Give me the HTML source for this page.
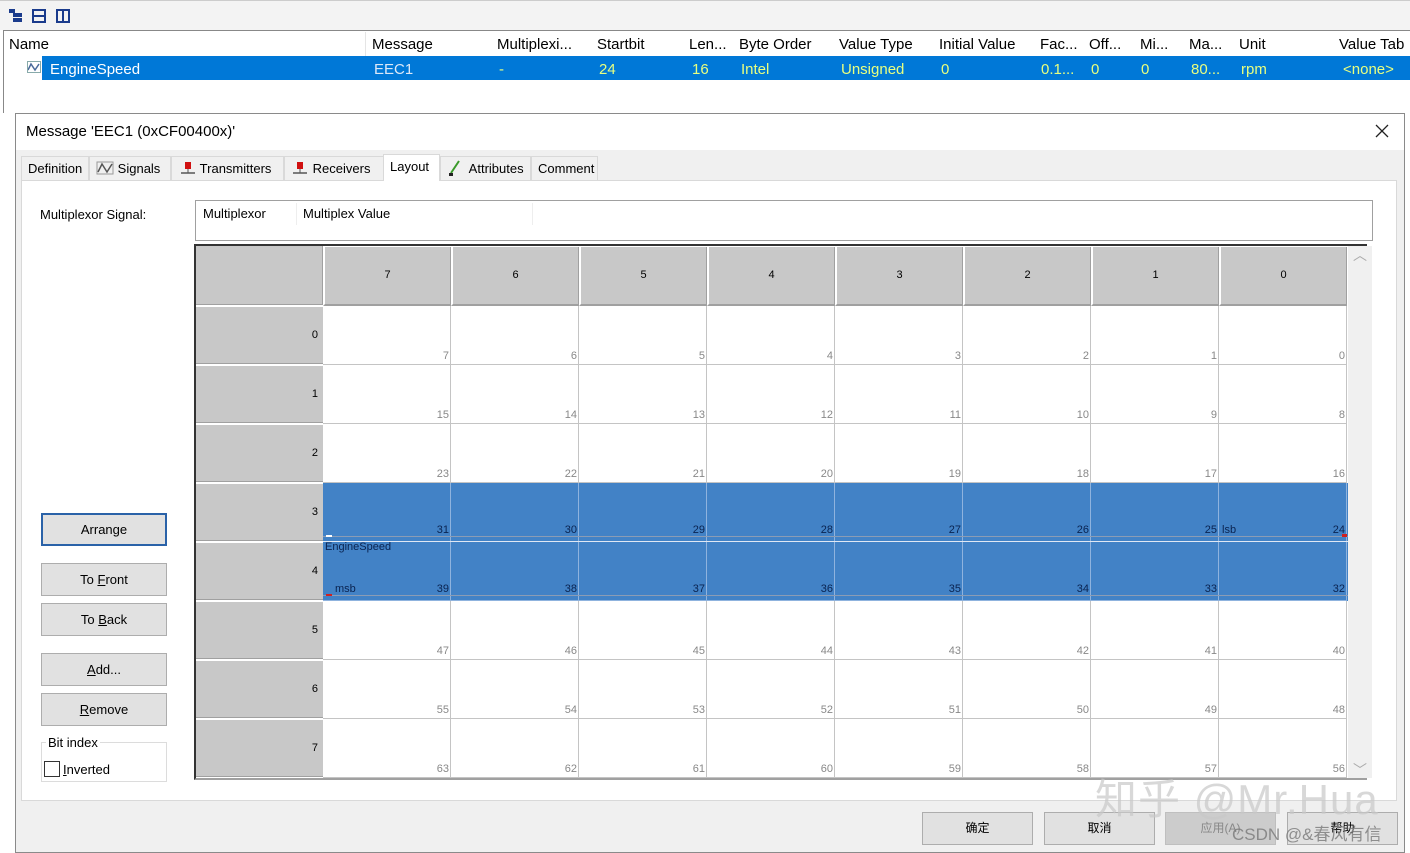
<!DOCTYPE html>
<html><head><meta charset="utf-8"><style>
*{margin:0;padding:0;box-sizing:border-box}
body{width:1410px;height:851px;overflow:hidden;background:#fff;font-family:"Liberation Sans","Noto Sans CJK SC",sans-serif;position:relative}
.a{position:absolute}
.hd{font-size:15px;color:#000;top:36px}
.sl{font-size:15px;color:#e8ff80;top:61px}
.tab{position:absolute;top:156px;height:24px;font-size:13px;border:1px solid #d9d9d9;border-bottom:none;background:#f0f0f0;padding:4px 6px 0 6px;white-space:nowrap}
.btn{position:absolute;left:41px;width:126px;height:33px;background:#e1e1e1;border:1px solid #adadad;font-size:13px;text-align:center;line-height:31px}
.bb{position:absolute;top:812px;width:111px;height:33px;background:#e1e1e1;border:1px solid #adadad;font-size:12px;text-align:center;line-height:31px}
.row{position:absolute;left:323px;width:1025px;height:59px;display:flex}
.row div{width:128px;height:59px;border-right:1px solid #c4c4c4;border-bottom:1px solid #c4c4c4;font-size:11px;color:#888;text-align:right;padding-right:1px;padding-top:44px}
.row.b div{color:#0a2350;border-right:1px solid #8fb3de;border-bottom:1px solid #8fb3de}
.rh{position:absolute;left:196px;width:127px;height:59px;background:#c8c8c8;border-top:2px solid #fff;border-bottom:1px solid #a0a0a0;font-size:11px;text-align:right;padding-right:5px;padding-top:22px}
.ch{position:absolute;top:247px;width:128px;height:59px;background:#c8c8c8;border-left:2px solid #fff;border-right:1px solid #a0a0a0;border-bottom:2px solid #a0a0a0;font-size:11px;text-align:center;padding-top:22px}
</style></head><body>
<div class="a" style="left:0;top:0;width:1410px;height:30px;background:#f3f3f3;border-top:1px solid #ccc"></div>
<svg class="a" style="left:8px;top:8px" width="66" height="16">
<rect x="1" y="1" width="6" height="4" fill="#1a3b8c"/><rect x="5" y="5" width="9" height="4" fill="#1a3b8c"/><rect x="5" y="10" width="9" height="4" fill="#1a3b8c"/>
<rect x="25" y="2" width="12" height="12" fill="none" stroke="#1a3b8c" stroke-width="2"/><line x1="25" y1="8" x2="37" y2="8" stroke="#1a3b8c" stroke-width="2"/>
<rect x="49" y="2" width="12" height="12" fill="none" stroke="#1a3b8c" stroke-width="2"/><line x1="55" y1="2" x2="55" y2="14" stroke="#1a3b8c" stroke-width="2"/>
</svg>
<div class="a" style="left:3px;top:30px;width:1407px;height:83px;border-left:1px solid #888;border-top:1px solid #888;background:#fff"></div>
<div class="a hd" style="left:9px">Name</div>
<div class="a hd" style="left:372px">Message</div>
<div class="a hd" style="left:497px">Multiplexi...</div>
<div class="a hd" style="left:597px">Startbit</div>
<div class="a hd" style="left:689px">Len...</div>
<div class="a hd" style="left:739px">Byte Order</div>
<div class="a hd" style="left:839px">Value Type</div>
<div class="a hd" style="left:939px">Initial Value</div>
<div class="a hd" style="left:1040px">Fac...</div>
<div class="a hd" style="left:1089px">Off...</div>
<div class="a hd" style="left:1140px">Mi...</div>
<div class="a hd" style="left:1189px">Ma...</div>
<div class="a hd" style="left:1239px">Unit</div>
<div class="a hd" style="left:1339px">Value Tab</div>
<div class="a" style="left:365px;top:32px;width:1px;height:24px;background:#e5e5e5"></div>
<div class="a" style="left:42px;top:56px;width:1368px;height:24px;background:#0078d7"></div>
<svg class="a" style="left:27px;top:61px" width="14" height="12"><path d="M1 9 L4 3 L8 9 L12 3" fill="none" stroke="#4a6a9a" stroke-width="1.5"/><rect x="0.5" y="0.5" width="13" height="11" fill="none" stroke="#8aa" /></svg>
<div class="a" style="left:50px;top:61px;font-size:15px;color:#fff">EngineSpeed</div>
<div class="a" style="left:374px;top:61px;font-size:15px;color:#dce8f8">EEC1</div>
<div class="a sl" style="left:499px">-</div>
<div class="a sl" style="left:599px">24</div>
<div class="a sl" style="left:692px">16</div>
<div class="a sl" style="left:741px">Intel</div>
<div class="a sl" style="left:841px">Unsigned</div>
<div class="a sl" style="left:941px">0</div>
<div class="a sl" style="left:1041px">0.1...</div>
<div class="a sl" style="left:1091px">0</div>
<div class="a sl" style="left:1141px">0</div>
<div class="a sl" style="left:1191px">80...</div>
<div class="a sl" style="left:1241px">rpm</div>
<div class="a sl" style="left:1343px">&lt;none&gt;</div>

<!-- dialog -->
<div class="a" style="left:15px;top:113px;width:1390px;height:740px;background:#f0f0f0;border:1px solid #8a8a8a"></div>
<div class="a" style="left:16px;top:114px;width:1388px;height:36px;background:#fff"></div>
<div class="a" style="left:26px;top:123px;font-size:15px">Message 'EEC1 (0xCF00400x)'</div>
<svg class="a" style="left:1375px;top:124px" width="14" height="14"><path d="M1 1 L13 13 M13 1 L1 13" stroke="#222" stroke-width="1.3"/></svg>
<div class="a" style="left:21px;top:180px;width:1376px;height:621px;background:#fff;border:1px solid #d9d9d9"></div>
<div class="tab" style="left:21px;width:68px">Definition</div>
<div class="tab" style="left:89px;width:82px">&nbsp;&nbsp;&nbsp;&nbsp;&nbsp;&nbsp;Signals</div>
<div class="tab" style="left:171px;width:113px">&nbsp;&nbsp;&nbsp;&nbsp;&nbsp;&nbsp;Transmitters</div>
<div class="tab" style="left:284px;width:100px">&nbsp;&nbsp;&nbsp;&nbsp;&nbsp;&nbsp;Receivers</div>
<div class="tab" style="left:383px;top:154px;height:27px;width:57px;background:#fff;padding-top:4px">Layout</div>
<div class="tab" style="left:440px;width:91px">&nbsp;&nbsp;&nbsp;&nbsp;&nbsp;&nbsp;Attributes</div>
<div class="tab" style="left:531px;width:67px">Comment</div>
<svg class="a" style="left:96px;top:161px" width="18" height="14"><path d="M2 11 L6 3 L11 11 L16 3" fill="none" stroke="#555" stroke-width="1.5"/><rect x="1" y="1" width="16" height="12" fill="none" stroke="#999"/></svg>
<svg class="a" style="left:179px;top:160px" width="18" height="16"><rect x="6" y="2" width="6" height="7" fill="#d01010"/><line x1="9" y1="9" x2="9" y2="13" stroke="#555"/><line x1="2" y1="13" x2="16" y2="13" stroke="#555" stroke-width="1.5"/></svg>
<svg class="a" style="left:291px;top:160px" width="18" height="16"><rect x="6" y="2" width="6" height="7" fill="#d01010"/><line x1="9" y1="9" x2="9" y2="13" stroke="#555"/><line x1="2" y1="13" x2="16" y2="13" stroke="#555" stroke-width="1.5"/></svg>
<svg class="a" style="left:447px;top:159px" width="16" height="18"><line x1="4" y1="14" x2="12" y2="2" stroke="#3a9a2a" stroke-width="2"/><rect x="2" y="14" width="4" height="3" fill="#222"/></svg>

<div class="a" style="left:40px;top:207px;font-size:13px">Multiplexor Signal:</div>
<div class="a" style="left:195px;top:200px;width:1178px;height:41px;border:1px solid #a0a0a0;background:#fff"></div>
<div class="a" style="left:203px;top:206px;font-size:13px">Multiplexor</div>
<div class="a" style="left:296px;top:203px;width:1px;height:22px;background:#eee"></div>
<div class="a" style="left:303px;top:206px;font-size:13px">Multiplex Value</div>
<div class="a" style="left:532px;top:203px;width:1px;height:22px;background:#eee"></div>

<!-- grid -->
<div class="a" style="left:194px;top:244px;width:1173px;height:536px;border-left:2px solid #333;border-top:2px solid #333;border-bottom:2px solid #a0a0a0;background:#fff"></div>
<div class="a" style="left:1348px;top:246px;width:24px;height:532px;background:#f0f0f0"></div>
<div class="a" style="left:1353px;top:245px;font-size:14px;color:#aaa">︿</div>
<div class="a" style="left:1353px;top:760px;font-size:14px;color:#aaa">﹀</div>
<div class="a" style="left:196px;top:246px;width:127px;height:60px;background:#c8c8c8;border-bottom:2px solid #a0a0a0;border-right:1px solid #a0a0a0"></div>
<div class="ch" style="left:323px">7</div><div class="ch" style="left:451px">6</div><div class="ch" style="left:579px">5</div><div class="ch" style="left:707px">4</div><div class="ch" style="left:835px">3</div><div class="ch" style="left:963px">2</div><div class="ch" style="left:1091px">1</div><div class="ch" style="left:1219px">0</div>

<div class="rh" style="top:305px">0</div><div class="rh" style="top:364px">1</div><div class="rh" style="top:423px">2</div><div class="rh" style="top:482px">3</div><div class="rh" style="top:541px">4</div><div class="rh" style="top:600px">5</div><div class="rh" style="top:659px">6</div><div class="rh" style="top:718px">7</div>

<div class="row" style="top:306px"><div>7</div><div>6</div><div>5</div><div>4</div><div>3</div><div>2</div><div>1</div><div>0</div></div>
<div class="row" style="top:365px"><div>15</div><div>14</div><div>13</div><div>12</div><div>11</div><div>10</div><div>9</div><div>8</div></div>
<div class="row" style="top:424px"><div>23</div><div>22</div><div>21</div><div>20</div><div>19</div><div>18</div><div>17</div><div>16</div></div>
<div class="a" style="left:323px;top:483px;width:1025px;height:118px;background:#4282c6"></div>
<div class="row b" style="top:483px"><div style="padding-top:41px">31</div><div style="padding-top:41px">30</div><div style="padding-top:41px">29</div><div style="padding-top:41px">28</div><div style="padding-top:41px">27</div><div style="padding-top:41px">26</div><div style="padding-top:41px">25</div><div style="padding-top:41px">24</div></div>
<div class="row b" style="top:542px"><div style="padding-top:41px">39</div><div style="padding-top:41px">38</div><div style="padding-top:41px">37</div><div style="padding-top:41px">36</div><div style="padding-top:41px">35</div><div style="padding-top:41px">34</div><div style="padding-top:41px">33</div><div style="padding-top:41px">32</div></div>
<div class="a" style="left:323px;top:536px;width:1025px;height:1px;background:#8a9cb5"></div>
<div class="a" style="left:323px;top:541px;width:1025px;height:1px;background:#e0e8f4"></div>
<div class="a" style="left:323px;top:595px;width:1025px;height:1px;background:#8a9cb5"></div>
<div class="a" style="left:325px;top:541px;font-size:11px;color:#0a2350">EngineSpeed</div>
<div class="a" style="left:335px;top:583px;font-size:11px;color:#0a2350">msb</div>
<div class="a" style="left:1222px;top:524px;font-size:11px;color:#0a2350">lsb</div>
<div class="a" style="left:326px;top:535px;width:6px;height:2px;background:#fff"></div>
<div class="a" style="left:326px;top:594px;width:6px;height:2px;background:#d02020"></div>
<div class="a" style="left:1342px;top:534px;width:5px;height:3px;background:#d02020"></div>
<div class="row" style="top:601px"><div>47</div><div>46</div><div>45</div><div>44</div><div>43</div><div>42</div><div>41</div><div>40</div></div>
<div class="row" style="top:660px"><div>55</div><div>54</div><div>53</div><div>52</div><div>51</div><div>50</div><div>49</div><div>48</div></div>
<div class="row" style="top:719px"><div>63</div><div>62</div><div>61</div><div>60</div><div>59</div><div>58</div><div>57</div><div>56</div></div>

<!-- left buttons -->
<div class="btn" style="top:513px;border:2px solid #2a62a8;line-height:29px">Arran<u>g</u>e</div>
<div class="btn" style="top:563px">To <u>F</u>ront</div>
<div class="btn" style="top:603px">To <u>B</u>ack</div>
<div class="btn" style="top:653px"><u>A</u>dd...</div>
<div class="btn" style="top:693px"><u>R</u>emove</div>
<div class="a" style="left:41px;top:742px;width:126px;height:40px;border:1px solid #dcdcdc"></div>
<div class="a" style="left:46px;top:735px;font-size:13px;background:#fff;padding:0 2px">Bit index</div>
<div class="a" style="left:44px;top:761px;width:16px;height:16px;border:1px solid #333;background:#fff"></div>
<div class="a" style="left:63px;top:762px;font-size:13px"><u>I</u>nverted</div>

<!-- bottom buttons -->
<div class="bb" style="left:922px">确定</div>
<div class="bb" style="left:1044px">取消</div>
<div class="bb" style="left:1165px;background:#cccccc;border-color:#bfbfbf;color:#888">应用(A)</div>
<div class="bb" style="left:1287px">帮助</div>
<div class="a" style="left:1095px;top:766px;font-size:42px;color:rgba(200,200,200,0.7);white-space:nowrap;letter-spacing:1px">知乎 @Mr.Hua</div>
<div class="a" style="left:1232px;top:820px;font-size:17px;color:rgba(120,120,120,0.8);white-space:nowrap">CSDN @&amp;春风有信</div>
</body></html>
